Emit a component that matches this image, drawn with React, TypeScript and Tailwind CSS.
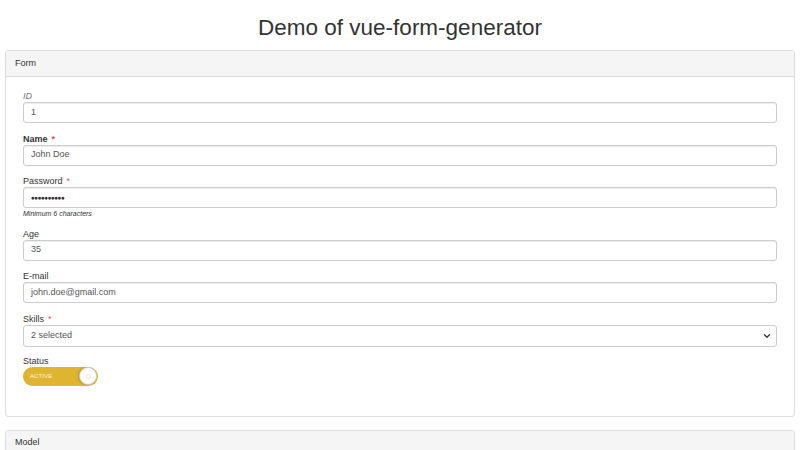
import {ChevronDown} from "lucide-react";

const font = {fontFamily: '"Liberation Sans", Arial, sans-serif'};

interface FieldProps {
  label: string;
  value?: string;
  required?: boolean;
  bold?: boolean;
  italic?: boolean;
  hint?: string;
  password?: boolean;
}

const Field = ({label, value, required, bold, italic, hint, password}: FieldProps) => (
  <div className="mb-[7.5px] flex flex-col">
    <label
      className={`mt-[2px] text-[9px] leading-[12px] ${bold ? "font-bold text-[#333]" : "text-[#333]"} ${
        italic ? "italic text-[#777]" : ""
      }`}
    >
      {label}
      {required && <span className="ml-[4px] text-[#d9534f]">*</span>}
    </label>
    <div className="flex h-[21px] items-center rounded-[3px] border border-[#ccc] bg-white px-[7px] text-[9px] text-[#555] shadow-[inset_0_1px_1px_rgba(0,0,0,0.075)]">
      {password ? (
        <span className="text-[6.5px] tracking-[-0.6px] text-[#333]">●●●●●●●●●●</span>
      ) : (
        value
      )}
    </div>
    {hint && (
      <div className="mt-[1px] text-[7px] leading-[9px] italic text-[#333]">{hint}</div>
    )}
  </div>
);

const App = () => {
  return (
    <div className="min-h-[450px] bg-white text-[#333]" style={font}>
      <h1 className="flex h-[50px] items-center justify-center pt-[6px] text-[22.5px] leading-none text-[#333]">
        Demo of vue-form-generator
      </h1>
      <div className="mx-[5px] rounded-[3px] border border-[#ddd]">
        <div className="flex h-[26px] items-center border-b border-[#ddd] bg-[#f5f5f5] px-[9px] text-[9px] text-[#333]">
          Form
        </div>
        <div className="px-[17px] pb-[22px] pt-[11px]">
          <Field label="ID" value="1" italic />
          <Field label="Name" value="John Doe" required bold />
          <Field label="Password" required password hint="Minimum 6 characters" />
          <Field label="Age" value="35" />
          <Field label="E-mail" value="john.doe@gmail.com" />
          <div className="mb-[6px] flex flex-col">
            <label className="mt-[2px] text-[9px] leading-[12px] text-[#333]">
              Skills<span className="ml-[4px] text-[#d9534f]">*</span>
            </label>
            <div className="flex h-[22px] items-center justify-between rounded-[3px] border border-[#ccc] bg-white pl-[7px] pr-[4px] text-[9px] text-[#555]">
              <span>2 selected</span>
              <ChevronDown size={10} strokeWidth={3} className="text-[#333]" />
            </div>
          </div>
          <div className="mb-[8px] flex flex-col">
            <label className="mt-[2px] text-[9px] leading-[12px] text-[#333]">Status</label>
            <div className="relative flex h-[19px] w-[75px] items-center rounded-full bg-[#dfb431] pl-[7px]">
              <span className="text-[6px] uppercase tracking-[0.1px] text-[#fff6d8]">Active</span>
              <div className="absolute right-[1px] top-[0.5px] flex h-[18px] w-[18px] items-center justify-center rounded-full border border-[#ccc] bg-white shadow-[-1px_0_2px_rgba(0,0,0,0.2)]">
                <span className="h-[5px] w-[5px] rounded-full border border-[#e5e5e5]" />
              </div>
            </div>
          </div>
        </div>
      </div>
      <div className="mx-[5px] mt-[13px] rounded-[3px] border border-[#ddd]">
        <div className="flex h-[26px] items-center border-b border-[#ddd] bg-[#f5f5f5] px-[9px] text-[9px] text-[#333]">
          Model
        </div>
      </div>
    </div>
  );
};

export default App;
